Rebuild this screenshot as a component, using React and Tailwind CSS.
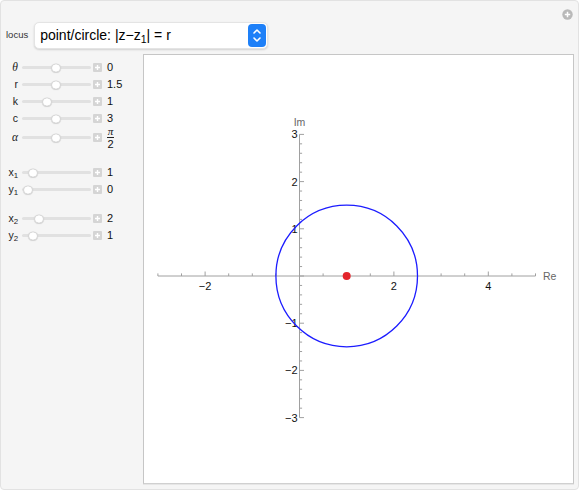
import React from "react";

const S = 47.2;
const OX = 299.5;
const OY = 276;
const px = (x) => OX + x * S;
const py = (y) => OY - y * S;

function Plot() {
  const xTicks = [];
  for (let i = -6; i <= 10; i++) {
    const v = i / 2;
    const major = i % 4 === 0;
    xTicks.push(
      <line key={"x" + i} x1={px(v)} x2={px(v)} y1={OY} y2={OY - (major ? 4.5 : 2.6)} stroke="#a0a0a0" strokeWidth="1" />
    );
  }
  const yTicks = [];
  for (let i = -15; i <= 15; i++) {
    const v = i / 5;
    const major = i % 5 === 0;
    yTicks.push(
      <line key={"y" + i} x1={OX} x2={OX + (major ? 4.5 : 2.6)} y1={py(v)} y2={py(v)} stroke="#a0a0a0" strokeWidth="1" />
    );
  }
  const tf = { fontFamily: "'Liberation Sans', Arial, sans-serif", fontSize: 11 };
  return (
    <svg width="429" height="428" viewBox="144 55 429 428" className="block">
      <line x1={px(-3)} x2={px(5)} y1={OY} y2={OY} stroke="#a0a0a0" strokeWidth="1" />
      <line x1={OX} x2={OX} y1={py(3)} y2={py(-3)} stroke="#a0a0a0" strokeWidth="1" />
      {xTicks}
      {yTicks}
      {[-2, 2, 4].map((v) => (
        <text key={"xl" + v} x={px(v)} y={OY + 13.5} textAnchor="middle" fill="#111" style={tf}>
          {v < 0 ? "\u2212" + Math.abs(v) : v}
        </text>
      ))}
      {[3, 2, 1, -1, -2, -3].map((v) => (
        <text key={"yl" + v} x={OX - 2} y={py(v) + 4} textAnchor="end" fill="#111" style={tf}>
          {v < 0 ? "\u2212" + Math.abs(v) : v}
        </text>
      ))}
      <text x={OX} y={126} textAnchor="middle" fill="#666" style={{ ...tf, fontSize: 10.5 }}>Im</text>
      <text x={543} y={280} fill="#666" style={{ ...tf, fontSize: 10.5 }}>Re</text>
      <circle cx={px(1)} cy={OY} r={1.5 * S} fill="none" stroke="#1c1cff" strokeWidth="1.3" />
      <circle cx={px(1)} cy={OY} r="4" fill="#e3242b" />
    </svg>
  );
}

function PlusBox() {
  return (
    <span className="flex h-[9px] w-[9px] items-center justify-center rounded-[1px] bg-[#d5d5d5]">
      <svg width="7" height="7" viewBox="0 0 7 7">
        <path d="M3.5 1v5M1 3.5h5" stroke="#fff" strokeWidth="1.4" />
      </svg>
    </span>
  );
}

function Slider({ label, pos, value, h = "h-[17px]", mt = "" }) {
  return (
    <div className={`flex items-center ${h} ${mt}`}>
      <div className="w-[18px] pr-[1px] text-right text-[10.5px] leading-none text-[#222]">{label}</div>
      <div className="relative ml-[3px] h-[3px] w-[69px] rounded-full bg-[#e1e1e1]">
        <div
          className="absolute top-1/2 h-[9px] w-[10px] -translate-x-1/2 -translate-y-1/2 rounded-full border border-[#d6d6d6] bg-white shadow-[0_0.5px_1px_rgba(0,0,0,0.15)]"
          style={{ left: pos }}
        />
      </div>
      <div className="ml-[2px]">
        <PlusBox />
      </div>
      <div className="ml-[5px] text-[11px] leading-none text-[#111]">{value}</div>
    </div>
  );
}

const serif = { fontFamily: "'Liberation Serif', 'Times New Roman', serif" };

export default function App() {
  return (
    <div className="h-[491px] w-[580px] bg-white" style={{ fontFamily: "'Liberation Sans', Arial, sans-serif" }}>
      <div className="relative h-[490px] w-[579px] rounded-[4px] border border-[#e2e2e2] bg-[#f5f5f5]">
        <div className="absolute right-[5px] top-[8px]">
          <svg width="11" height="11" viewBox="0 0 11 11">
            <circle cx="5.5" cy="5.5" r="5.2" fill="#b9b9b9" />
            <path d="M5.5 2.8v5.4M2.8 5.5h5.4" stroke="#fff" strokeWidth="1.5" />
          </svg>
        </div>
        <div className="flex items-center pl-[5px] pt-[21px]">
          <span className="text-[9.5px] text-[#333]">locus</span>
          <div className="ml-[6px] flex h-[27px] w-[234px] items-center justify-between rounded-[5px] border border-[#e4e4e4] bg-white pl-[5px] pr-[1px] shadow-[0_1px_2px_rgba(0,0,0,0.15)]">
            <span className="text-[14px] text-black">
              point/circle: |z{"\u2212"}z<sub>1</sub>| = r
            </span>
            <span className="flex h-[23px] w-[18px] items-center justify-center rounded-[4px] bg-[#1e80f8]">
              <svg width="10" height="17" viewBox="0 0 10 17">
                <path d="M2 6l3-3 3 3M2 11l3 3 3-3" fill="none" stroke="#fff" strokeWidth="1.6" strokeLinecap="round" strokeLinejoin="round" />
              </svg>
            </span>
          </div>
        </div>
        <div className="mt-[5px] flex">
          <div className="w-[142px] pt-[5px]">
            <Slider label={<i style={serif} className="text-[11.5px]">θ</i>} pos={34} value="0" />
            <Slider label="r" pos={34} value="1.5" />
            <Slider label="k" pos={24.5} value="1" />
            <Slider label="c" pos={34} value="3" />
            <Slider
              label={<i style={serif} className="text-[11.5px]">α</i>}
              pos={34}
              h="h-[19px]"
              mt="mt-[1px]"
              value={
                <span className="flex flex-col items-center leading-none">
                  <i style={serif} className="text-[11px] leading-[10px]">π</i>
                  <span className="my-[1px] h-px w-[7px] bg-[#222]" />
                  <span className="text-[11px] leading-[11px]">2</span>
                </span>
              }
            />
            <Slider label={<span>x<sub>1</sub></span>} pos={11.3} value="1" mt="mt-[17px]" />
            <Slider label={<span>y<sub>1</sub></span>} pos={5.7} value="0" />
            <Slider label={<span>x<sub>2</sub></span>} pos={17.3} value="2" mt="mt-[12px]" />
            <Slider label={<span>y<sub>2</sub></span>} pos={11.3} value="1" />
          </div>
          <div className="h-[430px] w-[431px] border border-[#c6c6c6] border-b-[#d0d0d0] bg-white shadow-[0_1px_0_#e6e6e6]">
            <Plot />
          </div>
        </div>
      </div>
    </div>
  );
}
